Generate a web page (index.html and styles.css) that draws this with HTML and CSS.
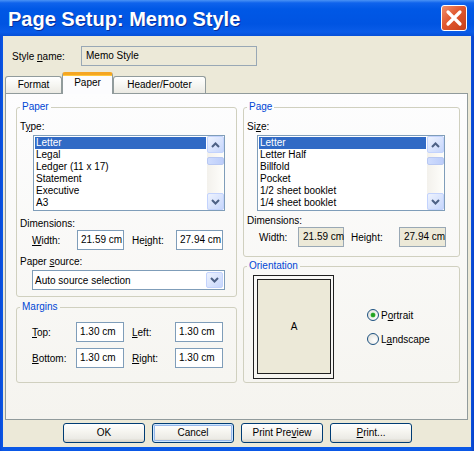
FILE: index.html
```html
<!DOCTYPE html>
<html>
<head>
<meta charset="utf-8">
<link rel="stylesheet" href="styles.css">
</head>
<body>
<div class="window">
  <div class="titlebar">
    <span class="title">Page Setup: Memo Style</span>
    <div class="close">
      <svg width="24" height="24" viewBox="0 0 24 24"><path d="M6 6 L18 18 M18 6 L6 18" stroke="#fff" stroke-width="3.2" stroke-linecap="round" fill="none"/></svg>
    </div>
  </div>
  <div class="frame">
    <div class="client">
      <div class="stylerow">
        <span class="stylelbl">Style <u>n</u>ame:</span>
        <div class="tb ro stylebox">Memo Style</div>
      </div>
      <div class="tabs">
        <div class="tab t-format">Format</div>
        <div class="tab t-paper active">Paper</div>
        <div class="tab t-hf">Header/Footer</div>
      </div>
      <div class="panel">
        <div class="col col-left">
          <fieldset class="group g-paper">
            <legend>Paper</legend>
            <div class="lbl">T<u>y</u>pe:</div>
            <div class="listbox lb-left">
              <div class="items">
                <div class="item sel">Letter</div>
                <div class="item">Legal</div>
                <div class="item">Ledger (11 x 17)</div>
                <div class="item">Statement</div>
                <div class="item">Executive</div>
                <div class="item">A3</div>
              </div>
              <div class="vscroll">
                <div class="sbtn"><svg width="9" height="6" viewBox="0 0 9 6"><path d="M1 5 L4.5 1.5 L8 5" stroke="#4d6185" stroke-width="2" fill="none"/></svg></div>
                <div class="track"><div class="thumb"></div></div>
                <div class="sbtn"><svg width="9" height="6" viewBox="0 0 9 6"><path d="M1 1 L4.5 4.5 L8 1" stroke="#4d6185" stroke-width="2" fill="none"/></svg></div>
              </div>
            </div>
            <div class="lbl dimlbl">Dimensions:</div>
            <div class="row dimrow">
              <span class="rl w45"><u>W</u>idth:</span>
              <div class="tb w47">21.59 cm</div>
              <span class="rl w44 ml8">He<u>i</u>ght:</span>
              <div class="tb w47">27.94 cm</div>
            </div>
            <div class="lbl srclbl">Paper <u>s</u>ource:</div>
            <div class="select">
              <span class="seltext">Auto source selection</span>
              <div class="sbtn dd"><svg width="9" height="6" viewBox="0 0 9 6"><path d="M1 1 L4.5 4.5 L8 1" stroke="#4d6185" stroke-width="2" fill="none"/></svg></div>
            </div>
          </fieldset>
          <fieldset class="group g-margins">
            <legend>Margins</legend>
            <div class="row mrow">
              <span class="rl w44"><u>T</u>op:</span>
              <div class="tb w48">1.30 cm</div>
              <span class="rl w43 ml8"><u>L</u>eft:</span>
              <div class="tb w48">1.30 cm</div>
            </div>
            <div class="row mrow mrow2">
              <span class="rl w44"><u>B</u>ottom:</span>
              <div class="tb w48">1.30 cm</div>
              <span class="rl w43 ml8"><u>R</u>ight:</span>
              <div class="tb w48">1.30 cm</div>
            </div>
          </fieldset>
        </div>
        <div class="col col-right">
          <fieldset class="group g-page">
            <legend>Page</legend>
            <div class="lbl">Si<u>z</u>e:</div>
            <div class="listbox lb-right">
              <div class="items">
                <div class="item sel">Letter</div>
                <div class="item">Letter Half</div>
                <div class="item">Billfold</div>
                <div class="item">Pocket</div>
                <div class="item">1/2 sheet booklet</div>
                <div class="item">1/4 sheet booklet</div>
              </div>
              <div class="vscroll">
                <div class="sbtn"><svg width="9" height="6" viewBox="0 0 9 6"><path d="M1 5 L4.5 1.5 L8 5" stroke="#4d6185" stroke-width="2" fill="none"/></svg></div>
                <div class="track"><div class="thumb"></div></div>
                <div class="sbtn"><svg width="9" height="6" viewBox="0 0 9 6"><path d="M1 1 L4.5 4.5 L8 1" stroke="#4d6185" stroke-width="2" fill="none"/></svg></div>
              </div>
            </div>
            <div class="lbl pdimlbl">Dimensions:</div>
            <div class="row pdimrow">
              <span class="rl w39">Width:</span>
              <div class="tb ro w46">21.59 cm</div>
              <span class="rl w48 ml7">Height:</span>
              <div class="tb ro w47">27.94 cm</div>
            </div>
          </fieldset>
          <fieldset class="group g-orient">
            <legend>Orientation</legend>
            <div class="orient">
              <div class="preview"><div class="sheet">A</div></div>
              <div class="radios">
                <div class="radio"><span class="dot on"></span><span>P<u>o</u>rtrait</span></div>
                <div class="radio"><span class="dot"></span><span>L<u>a</u>ndscape</span></div>
              </div>
            </div>
          </fieldset>
        </div>
      </div>
      <div class="buttons">
        <div class="btn">OK</div>
        <div class="btn default">Cancel</div>
        <div class="btn">Print Pre<u>v</u>iew</div>
        <div class="btn"><u>P</u>rint...</div>
      </div>
    </div>
  </div>
</div>
</body>
</html>
```
FILE: styles.css
```css
* { box-sizing: border-box; }
html, body { margin: 0; padding: 0; }
body {
  width: 474px;
  height: 451px;
  overflow: hidden;
  font-family: "Liberation Sans", Arial, sans-serif;
  font-size: 10px;
  color: #000;
  background: #0a54e0;
}
u { text-decoration: underline; text-underline-offset: 1px; }

.window {
  width: 474px;
  height: 451px;
  display: flex;
  flex-direction: column;
  background: #0a54e0;
}
.titlebar {
  height: 36px;
  flex: none;
  display: flex;
  align-items: flex-start;
  justify-content: space-between;
  padding: 7px 7px 0 8px;
  background: linear-gradient(#4a92f5 0, #0f63ec 3px, #0058e6 9px, #0054e2 24px, #0a5ce8 32px, #0650d8 36px);
}
.title {
  color: #fff;
  font-weight: bold;
  font-size: 20px;
  line-height: 24px;
  text-shadow: 1px 1px 0 #0b2f96;
}
.close {
  width: 26px;
  height: 26px;
  margin-top: -2px;
  border: 1px solid #fff;
  border-radius: 3px;
  background: linear-gradient(135deg, #f0906c 0%, #e0582f 45%, #c9401a 100%);
  display: flex;
  align-items: center;
  justify-content: center;
}

.frame {
  flex: 1;
  display: flex;
  padding: 0 4px 4px 3px;
  background: linear-gradient(90deg, #0a4ad8, #0a58e6 3px, #0a58e6 calc(100% - 4px), #0840c8);
}
.client {
  flex: 1;
  display: flex;
  flex-direction: column;
  background: #ece9d8;
  padding: 11px 3px 4px 2px;
}

.stylerow {
  display: flex;
  align-items: center;
  height: 18px;
  padding-left: 7px;
}
.stylelbl { width: 69px; }
.stylebox { width: 176px; height: 18px; line-height: 16px; }

.tabs {
  display: flex;
  align-items: flex-end;
  height: 21px;
  margin-top: 7px;
  position: relative;
  z-index: 1;
}
.tab {
  height: 17px;
  border: 1px solid #919b9c;
  border-bottom: none;
  border-radius: 3px 3px 0 0;
  background: linear-gradient(#ffffff, #f6f6f2 50%, #ebeae3);
  text-align: center;
  line-height: 16px;
}
.t-format { width: 57px; }
.t-paper { width: 51px; }
.t-hf { width: 93px; }
.tab.active {
  height: 22px;
  margin-bottom: -1px;
  border-top: 3px solid #f5a623;
  box-shadow: inset 0 1px 0 #ffc83c;
  background: #fcfcfe;
  line-height: 15px;
}

.panel {
  height: 327px;
  flex: none;
  border: 1px solid #919b9c;
  background: linear-gradient(#fdfdfe, #f5f4ef);
  padding: 7px 7px 0 10px;
  display: flex;
  gap: 6px;
  align-items: flex-start;
}
.col { display: flex; flex-direction: column; }
.col-left { width: 221px; }
.col-right { width: 217px; }

.group {
  margin: 0;
  min-width: 0;
  border: 1px solid #d0d0bf;
  border-radius: 3px;
}
.group legend {
  padding: 0 2px;
  margin: 0;
  color: #0046d5;
  font-size: 10px;
  line-height: 12px;
}
.g-paper { padding: 8px 11px 6px 3px; }
.g-margins { margin-top: 4px; padding: 9px 11px 14px 3px; }
.g-page { padding: 8px 11px 9px 3px; }
.g-orient { margin-top: 3px; padding: 3px 8px 3px 3px; }

.lbl { line-height: 12px; height: 12px; }
.dimlbl { margin-top: 7px; }
.srclbl { margin-top: 6px; }
.pdimlbl { margin-top: 4px; }

.listbox {
  display: flex;
  height: 76px;
  margin-top: 2px;
  border: 1px solid #7f9db9;
  background: #fff;
}
.lb-left { margin-left: 13px; }
.lb-right { margin-left: 10px; width: 188px; }
.items { flex: 1; padding: 1px 1px 0 1px; overflow: hidden; }
.item { height: 12px; line-height: 12px; padding-left: 1px; white-space: nowrap; }
.item.sel { background: #316ac5; color: #fff; }
.vscroll {
  width: 17px;
  flex: none;
  display: flex;
  flex-direction: column;
  background: linear-gradient(90deg, #f3f1ec, #fefefb);
}
.sbtn {
  width: 17px;
  height: 17px;
  flex: none;
  border: 1px solid #c3d3fd;
  border-radius: 2px;
  background: linear-gradient(135deg, #eef3fe, #c6d6fc);
  display: flex;
  align-items: center;
  justify-content: center;
}
.track { flex: 1; padding-top: 4px; }
.thumb {
  height: 8px;
  border: 1px solid #b8c8f2;
  border-radius: 2px;
  background: linear-gradient(90deg, #cfdcfd, #bccdfa);
}

.row { display: flex; align-items: center; height: 20px; }
.dimrow { margin-left: 12px; }
.mrow { margin-left: 12px; }
.mrow2 { margin-top: 6px; }
.pdimrow { margin-left: 12px; }
.rl { white-space: nowrap; }
.w39 { width: 39px; }
.w43 { width: 43px; }
.w44 { width: 44px; }
.w45 { width: 45px; }
.w46 { width: 46px; }
.w47 { width: 47px; }
.w48 { width: 48px; }
.ml7 { margin-left: 7px; }
.ml8 { margin-left: 8px; }

.tb {
  height: 20px;
  border: 1px solid #7f9db9;
  background: #fff;
  padding-left: 3px;
  line-height: 18px;
  white-space: nowrap;
}
.tb.ro { background: #ece9d8; border-color: #99a8b5; padding-left: 4px; }

.select {
  display: flex;
  align-items: center;
  height: 20px;
  margin-top: 2px;
  margin-left: 12px;
  border: 1px solid #7f9db9;
  background: #fff;
  padding-right: 1px;
}
.seltext { flex: 1; padding-left: 2px; }
.sbtn.dd { width: 17px; height: 16px; }

.orient { display: flex; align-items: center; }
.preview {
  width: 81px;
  height: 104px;
  margin-left: 6px;
  border: 1px solid #202020;
  padding: 3px 2px 4px 3px;
}
.sheet {
  height: 100%;
  border: 1px solid #202020;
  background: #ece9d8;
  display: flex;
  align-items: center;
  justify-content: center;
}
.radios {
  margin-left: 33px;
  display: flex;
  flex-direction: column;
  gap: 12px;
}
.radio { display: flex; align-items: center; gap: 2px; height: 12px; }
.dot {
  width: 12px;
  height: 12px;
  border: 1px solid #1c5180;
  border-radius: 50%;
  background: radial-gradient(circle at 65% 65%, #ffffff, #dcdcd6);
  display: flex;
  align-items: center;
  justify-content: center;
}
.dot.on::after {
  content: "";
  width: 4px;
  height: 4px;
  border-radius: 50%;
  background: #21a121;
  box-shadow: 0 0 0 0.5px #5fc55f;
}

.buttons {
  display: flex;
  justify-content: center;
  gap: 7px;
  height: 20px;
  margin-top: 3px;
  padding-left: 2px;
}
.btn {
  width: 82px;
  height: 20px;
  border: 1px solid #003c74;
  border-radius: 3px;
  background: linear-gradient(#ffffff 0%, #f5f4ef 45%, #ecebe6 80%, #d6d0c5 100%);
  text-align: center;
  line-height: 18px;
}
.btn.default {
  box-shadow: inset 0 0 0 1px #cee7ff, inset 0 0 0 2px #98b8ea;
}
```
